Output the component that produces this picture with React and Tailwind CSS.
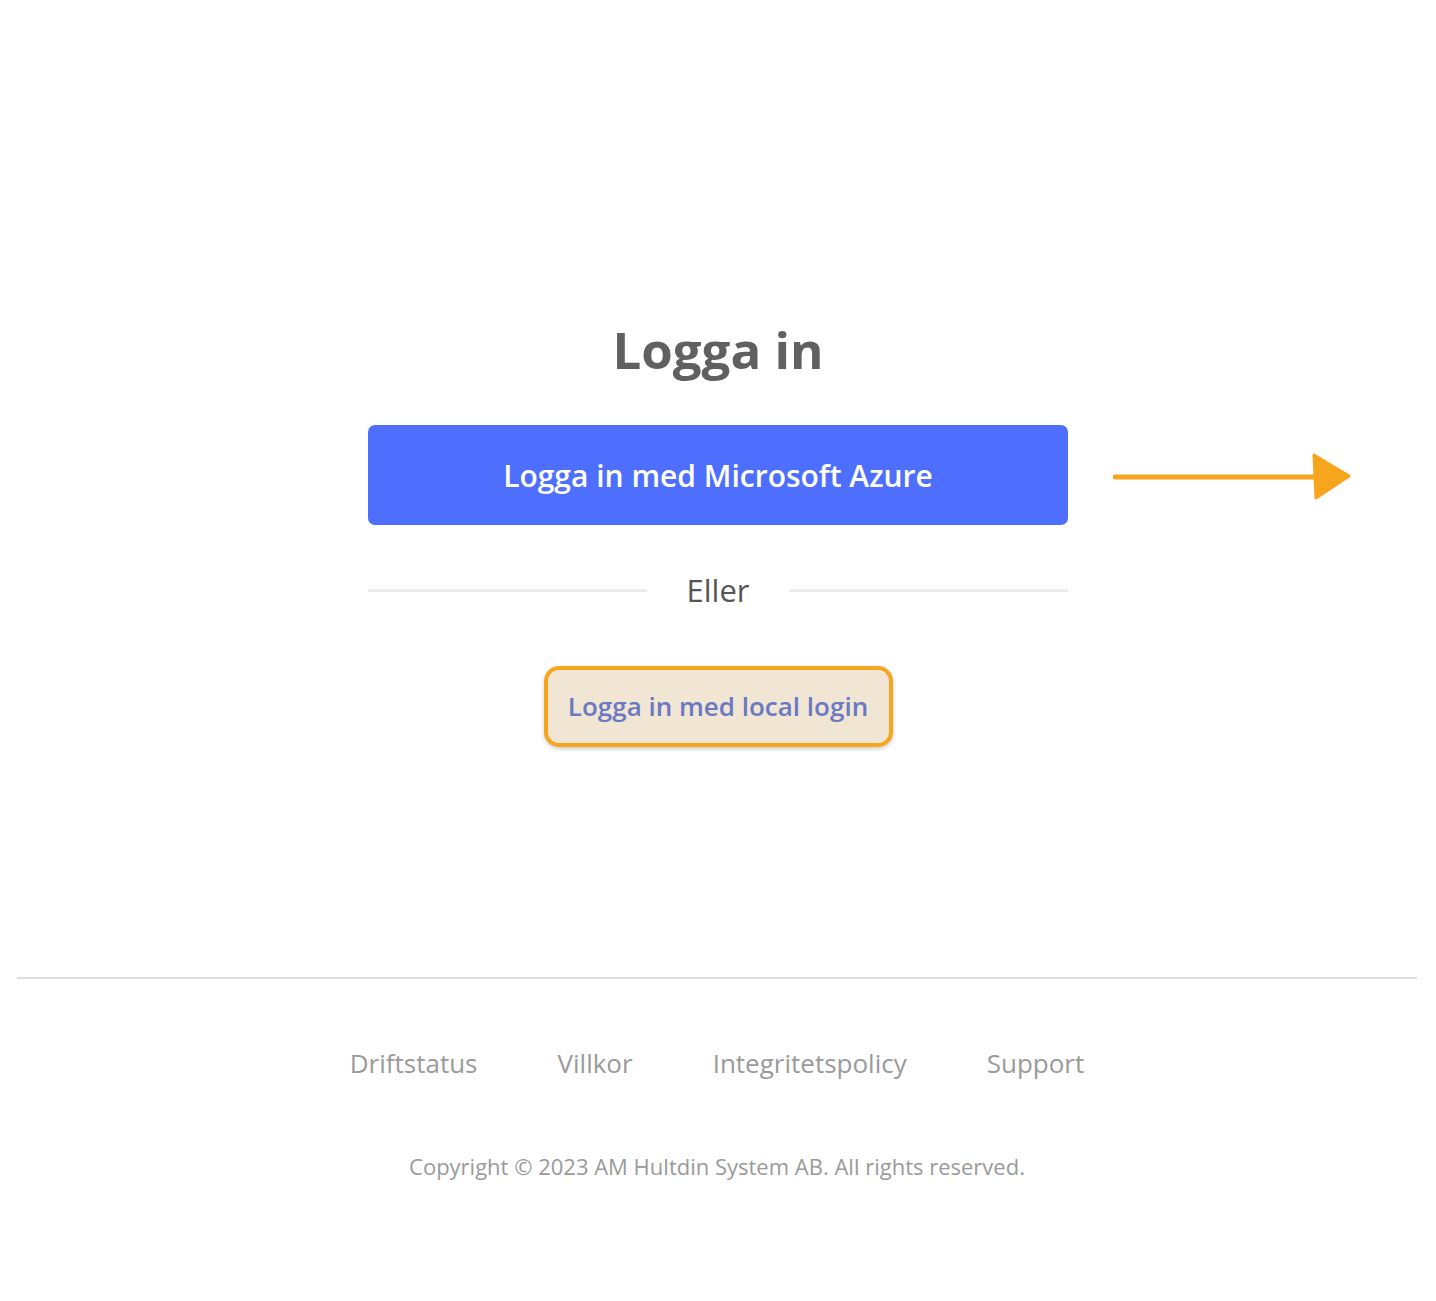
import React from "react";

function Arrow() {
  return (
    <svg
      className="absolute left-[745px] top-[27px]"
      width="240"
      height="50"
      viewBox="0 0 240 50"
    >
      <path d="M2 25 L206 25" stroke="#f7a51c" strokeWidth="5" strokeLinecap="round" fill="none" />
      <path d="M201 3 L236 24 L203 46 Z" fill="#f7a51c" stroke="#f7a51c" strokeWidth="3" strokeLinejoin="round" />
    </svg>
  );
}

export default function App() {
  return (
    <div className="min-h-[1301px] bg-white font-['Open_Sans',sans-serif]">
      {/* Login */}
      <main className="flex flex-col items-center pt-[315px]">
        <h1 className="text-[51px] font-bold leading-[68px] text-[#606060]">Logga in</h1>

        <div className="relative mt-[42px] w-[700px]">
          <button className="flex h-[100px] w-full items-center justify-center rounded-[7px] bg-[#4e6ffd] text-[30px] font-semibold text-white">
            Logga in med Microsoft Azure
          </button>
          <Arrow />
        </div>

        <div className="mt-[45px] flex w-[700px] items-center">
          <div className="h-[3px] flex-1 bg-[#ececec]" />
          <span className="px-[40px] text-[31px] leading-[40px] text-[#555]">Eller</span>
          <div className="h-[3px] flex-1 bg-[#ececec]" />
        </div>

        <button className="mt-[56px] flex h-[81px] w-[349px] items-center justify-center rounded-[15px] border-[4px] border-[#f7a51c] bg-[#f0e6d3] text-[26px] font-semibold text-[#6b78c2] shadow-[0_2px_4px_rgba(0,0,0,0.2)]">
          Logga in med local login
        </button>
      </main>

      {/* Footer */}
      <footer className="mt-[230px] pl-[17px] pr-[19px]">
        <div className="h-[2px] bg-[#dcdcdc]" />
        <nav className="mt-[66px] flex justify-center gap-[80px] text-[26px] leading-[36px] text-[#9a9a9a]">
          <a>Driftstatus</a>
          <a>Villkor</a>
          <a>Integritetspolicy</a>
          <a>Support</a>
        </nav>
        <p className="mt-[70px] text-center text-[22px] leading-[30px] text-[#9a9a9a]">
          Copyright © 2023 AM Hultdin System AB. All rights reserved.
        </p>
      </footer>
    </div>
  );
}
